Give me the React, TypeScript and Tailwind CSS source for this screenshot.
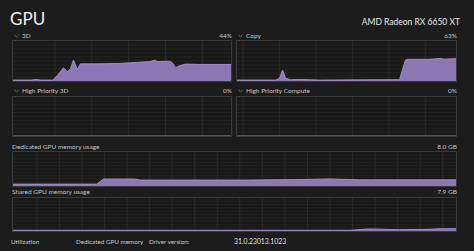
import React from 'react';

type Pt = [number, number];

interface ChartProps {
  box: [number, number, number, number]; // x, y, w, h in page px
  cols: number[];
  rows: number;
  points: Pt[];
  className?: string;
}

const Chart: React.FC<ChartProps> = ({ box, cols, rows, points, className }) => {
  const [x, y, w, h] = box;
  const bottom = y + h;
  const area =
    `M${points[0][0]},${bottom} ` +
    points.map(([px, py]) => `L${px},${py}`).join(' ') +
    ` L${points[points.length - 1][0]},${bottom} Z`;
  const line = points.map(([px, py], i) => `${i ? 'L' : 'M'}${px},${py}`).join(' ');
  const rowLines = Array.from({ length: rows - 1 }, (_, i) => y + ((i + 1) * h) / rows);

  return (
    <div className={`border border-[#3a3a3a] bg-[#191919] ${className ?? ''}`}>
      <svg className="block w-full h-full" viewBox={`${x} ${y} ${w} ${h}`} preserveAspectRatio="none">
        {rowLines.map((ly) => (
          <line key={`r${ly}`} x1={x} x2={x + w} y1={ly} y2={ly} stroke="#272727" strokeWidth={0.8} />
        ))}
        {cols.map((lx) => (
          <line key={`c${lx}`} x1={lx} x2={lx} y1={y} y2={y + h} stroke="#2e2e2e" strokeWidth={0.8} />
        ))}
        <path d={area} fill="#8b77b4" />
        <path d={line} fill="none" stroke="#a896d0" strokeWidth={0.9} />
      </svg>
    </div>
  );
};

const Chevron = () => (
  <svg width="5" height="4" viewBox="0 0 5 4" className="mr-[3px]">
    <path d="M0.6 1 L2.5 2.8 L4.4 1" fill="none" stroke="#9a9a9a" strokeWidth="0.7" />
  </svg>
);

const Label: React.FC<{ name: string; value: string; chevron?: boolean; className?: string }> = ({
  name,
  value,
  chevron,
  className,
}) => (
  <div
    className={`flex items-center justify-between whitespace-nowrap text-[6.5px] leading-none text-[#c4c4c4] ${className ?? ''}`}
  >
    <span className={`flex items-center ${chevron ? 'pl-[2px]' : ''}`}>
      {chevron && <Chevron />}
      {name}
    </span>
    <span>{value}</span>
  </div>
);

const step = (start: number, gap: number, end: number) => {
  const out: number[] = [];
  for (let v = start; v < end; v += gap) out.push(v);
  return out;
};

const threeD: Pt[] = [
  [12, 81], [30, 81], [35, 80.4], [40, 81], [52, 81], [57, 76], [63, 68], [67, 72.5], [70, 69],
  [73, 60], [77, 70], [80, 64], [100, 64], [120, 63.5], [135, 62.6], [150, 61.6], [155, 60.3],
  [158, 61.6], [170, 61.2], [173, 63], [176, 68], [180, 66], [186, 64.2], [200, 64.6], [232, 64.6],
];

const copy: Pt[] = [
  [236, 81], [275, 81], [279, 79], [282, 70.5], [285, 79], [290, 80.6], [300, 80.4], [320, 81],
  [360, 80.8], [400, 80.6], [403, 70], [406, 60], [409, 59.2], [430, 59.2], [440, 58.4],
  [445, 59], [457, 58.6],
];

const flat: Pt[] = [[12, 137], [232, 137]];
const flat2: Pt[] = [[236, 137], [457, 137]];

const dedicated: Pt[] = [
  [12, 185], [96, 185], [103, 179.6], [134, 179.6], [140, 180.7], [250, 180.7], [300, 180.2],
  [330, 179.5], [360, 180.5], [457, 180.5],
];

const shared: Pt[] = [
  [12, 231.2], [350, 231.2], [370, 229.8], [400, 230.6], [430, 230.2], [440, 229.6], [457, 229.6],
];

export default function App() {
  return (
    <div
      className="w-[474px] h-[251px] overflow-hidden bg-[#1c1c1c] text-[#e6e6e6] pl-[12px] pr-[17px]"
      style={{ fontFamily: 'Lato, "Open Sans", sans-serif' }}
    >
      <div className="h-[32px] flex items-end justify-between pb-[5px]">
        <span className="-ml-[2px] text-[17px] leading-none text-[#f0f0f0]">GPU</span>
        <span className="text-[8.5px] leading-none text-[#e8e8e8] mr-[-3px] mb-[1px]">AMD Radeon RX 6650 XT</span>
      </div>

      <div className="grid grid-cols-[220px_221px] gap-x-[4px]">
        <Label name="3D" value="44%" chevron className="h-[8px]" />
        <Label name="Copy" value="63%" chevron className="h-[8px]" />
        <Chart box={[12, 40, 220, 42]} cols={step(54.3, 37.2, 232)} rows={10} points={threeD} className="h-[42px]" />
        <Chart box={[236, 40, 221, 42]} cols={step(242, 36.8, 457)} rows={10} points={copy} className="h-[42px]" />
        <Label name="High Priority 3D" value="0%" chevron className="h-[14px] pt-[4px]" />
        <Label name="High Priority Compute" value="0%" chevron className="h-[14px] pt-[4px]" />
        <Chart box={[12, 96, 220, 41]} cols={step(54.3, 37.2, 232)} rows={10} points={flat} className="h-[41px]" />
        <Chart box={[236, 96, 221, 41]} cols={step(242, 36.8, 457)} rows={10} points={flat2} className="h-[41px]" />
      </div>

      <Label name="Dedicated GPU memory usage" value="8.0 GB" className="h-[14px] pt-[6px]" />
      <Chart box={[12, 151, 445, 36]} cols={step(36, 22.65, 457)} rows={10} points={dedicated} className="h-[36px]" />
      <Label name="Shared GPU memory usage" value="7.9 GB" className="h-[10px] pt-[1px]" />
      <Chart box={[12, 197, 445, 35]} cols={step(36, 22.65, 457)} rows={10} points={shared} className="h-[35px]" />

      <div className="grid grid-cols-[64px_73px_85px_1fr] pt-[4px] whitespace-nowrap text-[6.3px] leading-[11px] text-[#c9c9c9]">
        <span className="-ml-[1px]">Utilization</span>
        <span>Dedicated GPU memory</span>
        <span>Driver version:</span>
        <span className="text-[#e0e0e0] text-[6.8px]">31.0.23013.1023</span>
        <span />
        <span />
        <span className="text-[#8a8a8a]">Driver date:</span>
        <span className="text-[#8a8a8a]">1/27/2023</span>
      </div>
    </div>
  );
}
